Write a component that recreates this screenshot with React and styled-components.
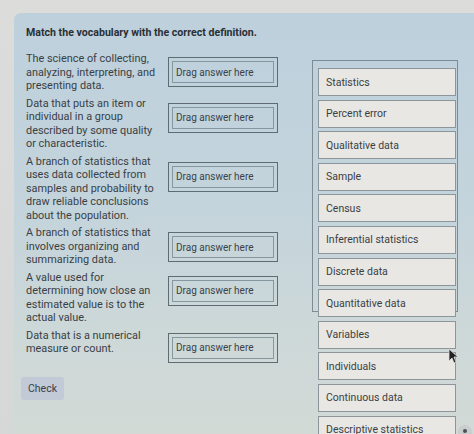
import React from "react";
import styled, { createGlobalStyle } from "styled-components";

const Global = createGlobalStyle`
  html, body { margin: 0; padding: 0; }
  body {
    background: #d6d7d5;
    font-family: Roboto, "Liberation Sans", sans-serif;
    overflow: hidden;
  }
`;

const Page = styled.div`
  position: relative;
  width: 474px;
  height: 434px;
  overflow: hidden;
  padding: 13px 0 0 14px;
  box-sizing: border-box;
  background: linear-gradient(180deg, #dcdcdb 0%, #d5d8d7 100%);
`;

const Panel = styled.div`
  width: 480px;
  height: 430px;
  border-radius: 7px 0 0 0;
  background: linear-gradient(180deg, #bdd0dc 0%, #c4d4dc 45%, #cdd8d8 75%, #d3dad6 100%);
  padding: 13px 0 0 12px;
  box-sizing: border-box;
  color: #363b40;
`;

const Title = styled.div`
  font-weight: 700;
  font-size: 10.6px;
  line-height: 13px;
  color: #2a2f35;
  margin-bottom: 13px;
`;

const Content = styled.div`
  display: flex;
  align-items: flex-start;
`;

const LeftCol = styled.div`
  width: 286px;
  display: flex;
  flex-direction: column;
  gap: 4px;
`;

const Row = styled.div`
  display: grid;
  grid-template-columns: 138px 110px;
  column-gap: 4px;
  align-items: start;
`;

const Definition = styled.div`
  font-size: 10.9px;
  line-height: 13.5px;
  color: #3a3f45;
`;

const DropZone = styled.div`
  margin-top: ${(p) => p.$offset ?? 5}px;
  height: 30px;
  box-sizing: border-box;
  border: 1px solid #5f6c74;
  padding: 3px;
`;

const DropInner = styled.div`
  height: 100%;
  box-sizing: border-box;
  border: 1px solid #8797a0;
  font-size: 10px;
  color: #3c4248;
  display: flex;
  align-items: center;
  padding-left: 3px;
`;

const CheckButton = styled.button`
  margin-top: 10px;
  margin-left: -5px;
  width: 43px;
  height: 23px;
  border: none;
  border-radius: 3px;
  background: #c2cad8;
  color: #3a4048;
  font-family: inherit;
  font-size: 10.5px;
  padding: 0;
`;

const WordBank = styled.div`
  margin-top: 8px;
  width: 146px;
  height: 252px;
  box-sizing: border-box;
  border: 1px solid #7e8b93;
  padding: 7px 0 0 5px;
  display: flex;
  flex-direction: column;
  gap: 3.6px;
`;

const Card = styled.div`
  flex: none;
  width: 138px;
  height: 28px;
  box-sizing: border-box;
  border: 1px solid #8c9599;
  background: #e8e7e3;
  font-size: 10.5px;
  color: #3a3f45;
  display: flex;
  align-items: center;
  padding-left: 7px;
`;

const Cursor = styled.svg`
  position: absolute;
  left: 448px;
  top: 348px;
`;

const Dot = styled.div`
  position: absolute;
  left: 458px;
  top: 425px;
  width: 14px;
  height: 14px;
  border-radius: 50%;
  background: #c9cdcd;
  &::after {
    content: "";
    position: absolute;
    left: 5px;
    top: 4px;
    width: 4px;
    height: 4px;
    border-radius: 50%;
    background: #4a4f55;
  }
`;

const rows = [
  { text: "The science of collecting, analyzing, interpreting, and presenting data.", off: 5 },
  { text: "Data that puts an item or individual in a group described by some quality or characteristic.", off: 6 },
  { text: "A branch of statistics that uses data collected from samples and probability to draw reliable conclusions about the population.", off: 7 },
  { text: "A branch of statistics that involves organizing and summarizing data.", off: 6 },
  { text: "A value used for determining how close an estimated value is to the actual value.", off: 5 },
  { text: "Data that is a numerical measure or count.", off: 4 },
];

const words = [
  "Statistics",
  "Percent error",
  "Qualitative data",
  "Sample",
  "Census",
  "Inferential statistics",
  "Discrete data",
  "Quantitative data",
  "Variables",
  "Individuals",
  "Continuous data",
  "Descriptive statistics",
];

export default function App() {
  return (
    <>
      <Global />
      <Page>
        <Panel>
          <Title>Match the vocabulary with the correct definition.</Title>
          <Content>
            <LeftCol>
              {rows.map((r, i) => (
                <Row key={i}>
                  <Definition>{r.text}</Definition>
                  <DropZone $offset={r.off}>
                    <DropInner>Drag answer here</DropInner>
                  </DropZone>
                </Row>
              ))}
              <CheckButton>Check</CheckButton>
            </LeftCol>
            <WordBank>
              {words.map((w) => (
                <Card key={w}>{w}</Card>
              ))}
            </WordBank>
          </Content>
        </Panel>
        <Cursor width="10" height="16" viewBox="0 0 10 16">
          <path d="M1 1 L1 13 L4 10 L6 15 L8 14 L6 9 L10 9 Z" fill="#222" stroke="#ddd" strokeWidth="0.8" />
        </Cursor>
        <Dot />
      </Page>
    </>
  );
}
